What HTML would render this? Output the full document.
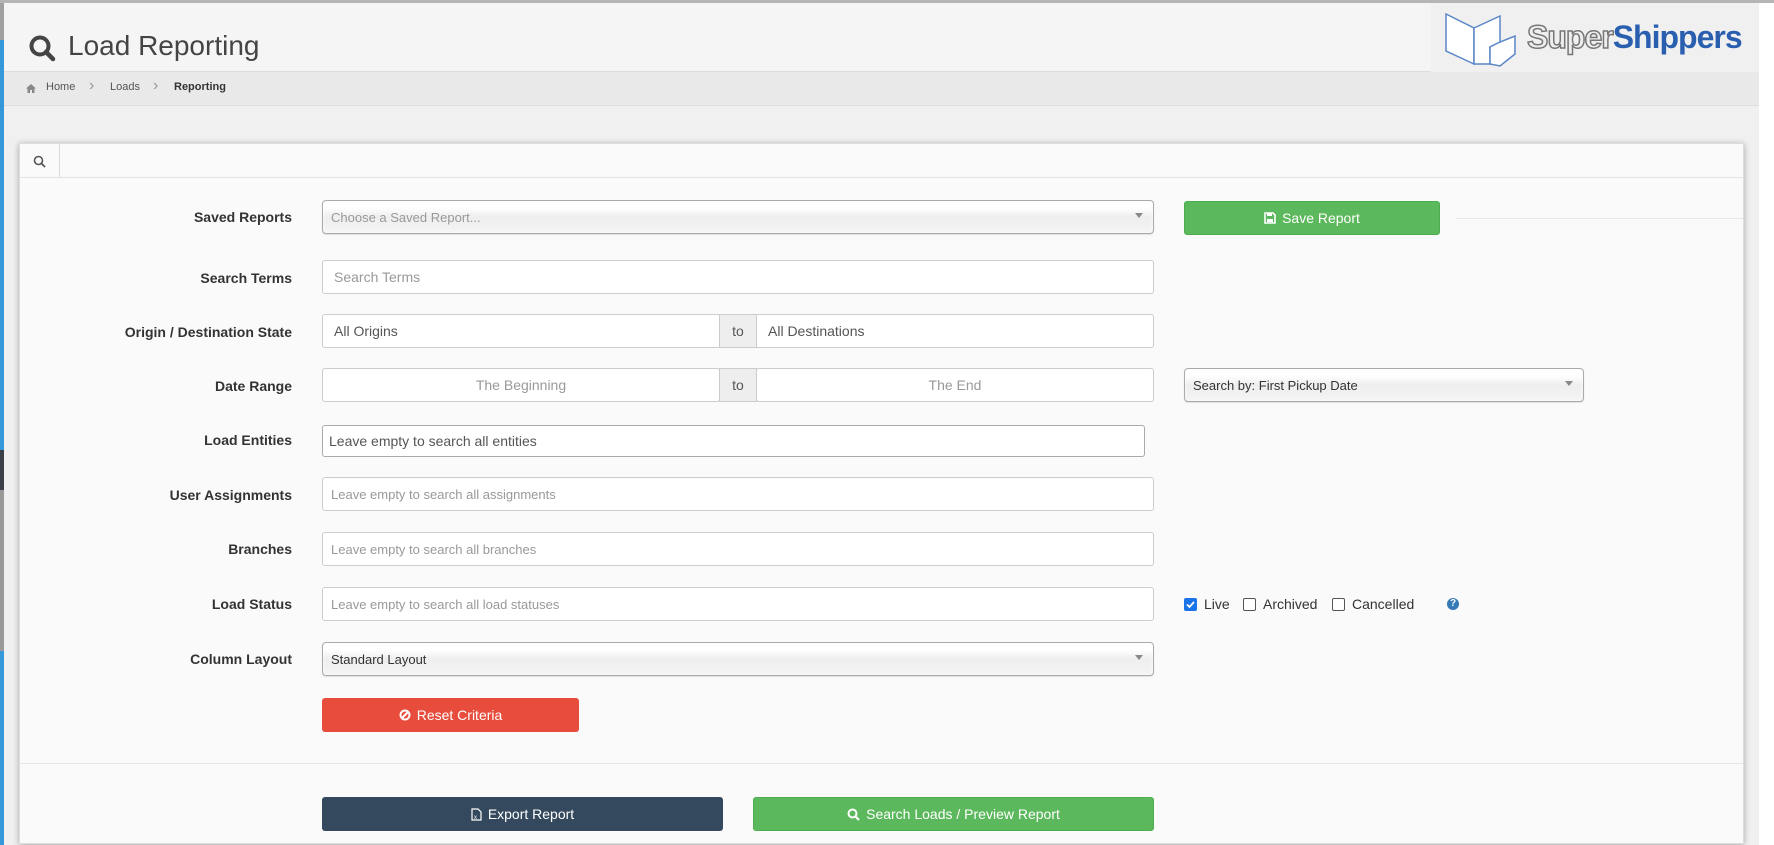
<!DOCTYPE html>
<html><head><meta charset="utf-8"><style>
*{box-sizing:border-box;margin:0;padding:0}
body{width:1774px;height:845px;overflow:hidden;background:#fff;font-family:"Liberation Sans",Arial,sans-serif;position:relative;color:#333}
.a{position:absolute}
.lbl{position:absolute;right:1482px;font-weight:bold;font-size:14px;color:#333;text-align:right;white-space:nowrap}
.inp{position:absolute;background:#fff;border:1px solid #ccc;border-radius:3px;font-size:14px;color:#555;padding-left:11px;display:flex;align-items:center}
.ph{color:#999}
.sel{position:absolute;border:1px solid #aaa;border-radius:4px;background:linear-gradient(#fff 20%,#eee 50%,#f4f4f4);font-size:13px;padding-left:8px;display:flex;align-items:center;box-shadow:0 0 3px #fff inset,0 1px 1px rgba(0,0,0,.1)}
.sel:after{content:"";position:absolute;right:10px;top:12px;border:4px solid transparent;border-top:5px solid #888}
.btn{position:absolute;border-radius:3px;color:#fff;font-size:14px;display:flex;align-items:center;justify-content:center;gap:6px}
.cb{position:absolute;width:13px;height:13px;border:1px solid #555;border-radius:2px;background:#fff}
</style></head><body>
<div class="a" style="left:0;top:0;width:1774px;height:3px;background:#b5b5b5"></div>
<div class="a" style="left:0;top:3px;width:4px;height:842px;background:#3498db"></div>
<div class="a" style="left:0;top:3px;width:4px;height:37px;background:#a0a0a0"></div>
<div class="a" style="left:0;top:450px;width:4px;height:40px;background:#3a3f48"></div>
<div class="a" style="left:0;top:490px;width:4px;height:161px;background:#999"></div>
<div class="a" style="left:4px;top:3px;width:1755px;height:842px;background:#f0f0f0"></div>
<div class="a" style="left:4px;top:3px;width:1427px;height:69px;background:#f5f5f5;border-bottom:1px solid #ddd"></div>
<div class="a" style="left:1431px;top:3px;width:328px;height:69px;background:#f0f0f0"></div>
<div class="a" style="left:4px;top:72px;width:1755px;height:34px;background:#e9e9e9;border-bottom:1px solid #ddd"></div>
<svg class="a" style="left:28px;top:34px" width="28" height="28" viewBox="0 0 28 28"><circle cx="12" cy="12" r="8.5" fill="none" stroke="#444" stroke-width="4"/><path d="M18 18l7 7" stroke="#444" stroke-width="4.5" stroke-linecap="round"/></svg>
<div class="a" style="left:68px;top:30px;font-size:28px;color:#444">Load Reporting</div>
<svg class="a" style="left:26px;top:84px" width="10" height="9" viewBox="0 0 10 9"><path d="M5 0L0 4.5h1.5V9h2.5V6h2v3h2.5V4.5H10z" fill="#888"/></svg>
<div class="a" style="left:46px;top:81px;font-size:11px;color:#555">Home</div>
<div class="a" style="left:89px;top:77px;font-size:16px;color:#999">&#8250;</div>
<div class="a" style="left:110px;top:81px;font-size:11px;color:#555">Loads</div>
<div class="a" style="left:153px;top:77px;font-size:16px;color:#999">&#8250;</div>
<div class="a" style="left:174px;top:81px;font-size:11px;color:#333;font-weight:bold">Reporting</div>
<svg class="a" style="left:1443px;top:8px" width="80" height="60" viewBox="0 0 80 60"><g fill="#fff" stroke="#5b86c8" stroke-width="1.5"><path d="M3 6l28 14v36L3 43z"/><path d="M31 20l26-12v26l-10 5v17l-16-0z"/><path d="M47 39l10-5 15-6v18l-15 12-10-2z"/></g></svg>
<div class="a" style="left:1527px;top:19px;font-size:32px;font-weight:bold;letter-spacing:-1px;white-space:nowrap"><span style="color:#eee;-webkit-text-stroke:1.5px #777">Super</span><span style="color:#2a5fb0">Shippers</span></div>
<div class="a" style="left:19px;top:143px;width:1725px;height:701px;background:#fafafa;border:1px solid #ddd;box-shadow:0 1px 6px rgba(0,0,0,.3)"></div>
<div class="a" style="left:20px;top:177px;width:1723px;height:1px;background:#e3e3e3"></div>
<div class="a" style="left:59px;top:144px;width:1px;height:34px;background:#ddd"></div>
<svg class="a" style="left:33px;top:155px" width="13" height="13" viewBox="0 0 13 13"><circle cx="5.5" cy="5.5" r="4" fill="none" stroke="#555" stroke-width="1.6"/><path d="M8.5 8.5l3.5 3.5" stroke="#555" stroke-width="1.8"/></svg>
<div class="a" style="left:1456px;top:218px;width:287px;height:1px;background:#e8e8e8"></div>
<div class="a" style="left:20px;top:763px;width:1723px;height:1px;background:#e8e8e8"></div>

<div class="lbl" style="top:209px">Saved Reports</div>
<div class="sel ph" style="left:322px;top:200px;width:832px;height:34px;color:#999">Choose a Saved Report...</div>
<div class="btn" style="left:1184px;top:201px;width:256px;height:34px;background:#5cb85c;border:1px solid #4cae4c"><svg width="12" height="12" viewBox="0 0 12 12"><path d="M1 1h8l2 2v8H1z" fill="none" stroke="#fff" stroke-width="1.6"/><rect x="3" y="1" width="5" height="3" fill="#fff"/><rect x="3" y="7" width="6" height="3" fill="#fff"/></svg>Save Report</div>

<div class="lbl" style="top:270px">Search Terms</div>
<div class="inp ph" style="left:322px;top:260px;width:832px;height:34px">Search Terms</div>

<div class="lbl" style="top:324px">Origin / Destination State</div>
<div class="inp" style="left:322px;top:314px;width:398px;height:34px;border-radius:3px 0 0 3px">All Origins</div>
<div class="inp" style="left:719px;top:314px;width:38px;height:34px;background:#eee;border-radius:0;padding:0;justify-content:center">to</div>
<div class="inp" style="left:756px;top:314px;width:398px;height:34px;border-radius:0 3px 3px 0">All Destinations</div>

<div class="lbl" style="top:378px">Date Range</div>
<div class="inp ph" style="left:322px;top:368px;width:398px;height:34px;justify-content:center;padding:0">The Beginning</div>
<div class="inp" style="left:719px;top:368px;width:38px;height:34px;background:#eee;border-radius:0;padding:0;justify-content:center">to</div>
<div class="inp ph" style="left:756px;top:368px;width:398px;height:34px;justify-content:center;padding:0">The End</div>
<div class="sel" style="left:1184px;top:368px;width:400px;height:34px;color:#333">Search by: First Pickup Date</div>

<div class="lbl" style="top:432px">Load Entities</div>
<div class="inp" style="left:322px;top:425px;width:823px;height:32px;border-color:#aaa;padding-left:6px">Leave empty to search all entities</div>

<div class="lbl" style="top:487px">User Assignments</div>
<div class="inp ph" style="left:322px;top:477px;width:832px;height:34px;font-size:13px;padding-left:8px">Leave empty to search all assignments</div>

<div class="lbl" style="top:541px">Branches</div>
<div class="inp ph" style="left:322px;top:532px;width:832px;height:34px;font-size:13px;padding-left:8px">Leave empty to search all branches</div>

<div class="lbl" style="top:596px">Load Status</div>
<div class="inp ph" style="left:322px;top:587px;width:832px;height:34px;font-size:13px;padding-left:8px">Leave empty to search all load statuses</div>
<div class="cb" style="left:1184px;top:598px;background:#1a73e8;border-color:#1a73e8"><svg width="11" height="11" viewBox="0 0 11 11" style="position:absolute;left:0;top:0"><path d="M2 5.5l2.5 2.5 4.5-5" stroke="#fff" stroke-width="1.8" fill="none"/></svg></div>
<div class="a" style="left:1204px;top:596px;font-size:14px;color:#333">Live</div>
<div class="cb" style="left:1243px;top:598px"></div>
<div class="a" style="left:1263px;top:596px;font-size:14px;color:#333">Archived</div>
<div class="cb" style="left:1332px;top:598px"></div>
<div class="a" style="left:1352px;top:596px;font-size:14px;color:#333">Cancelled</div>
<div class="a" style="left:1447px;top:598px;width:12px;height:12px;border-radius:50%;background:#337ab7;color:#fff;font-size:10px;font-weight:bold;text-align:center;line-height:12px">?</div>

<div class="lbl" style="top:651px">Column Layout</div>
<div class="sel" style="left:322px;top:642px;width:832px;height:34px;color:#333">Standard Layout</div>

<div class="btn" style="left:322px;top:698px;width:257px;height:34px;background:#e74c3c"><svg width="12" height="12" viewBox="0 0 12 12"><circle cx="6" cy="6" r="4.5" fill="none" stroke="#fff" stroke-width="2"/><path d="M3 9l6-6" stroke="#fff" stroke-width="2"/></svg>Reset Criteria</div>

<div class="btn" style="left:322px;top:797px;width:401px;height:34px;background:#34495e"><svg width="11" height="13" viewBox="0 0 11 13"><path d="M1 1h6l3 3v8H1z" fill="none" stroke="#fff" stroke-width="1.2"/><text x="3" y="11" font-size="6" fill="#fff" font-family="Liberation Sans">x</text></svg>Export Report</div>
<div class="btn" style="left:753px;top:797px;width:401px;height:34px;background:#5cb85c;border:1px solid #4cae4c"><svg width="13" height="13" viewBox="0 0 13 13"><circle cx="5.5" cy="5.5" r="4" fill="none" stroke="#fff" stroke-width="2"/><path d="M8.5 8.5l3.5 3.5" stroke="#fff" stroke-width="2.2"/></svg>Search Loads / Preview Report</div>
</body></html>
